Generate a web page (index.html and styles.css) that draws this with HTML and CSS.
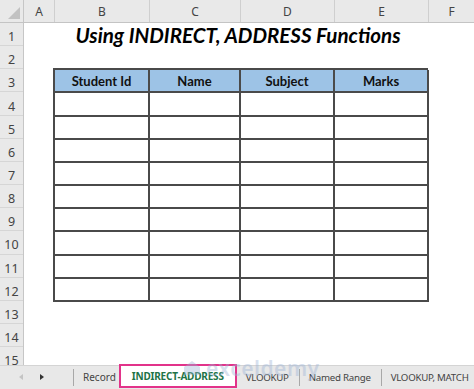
FILE: index.html
```html
<!DOCTYPE html>
<html>
<head>
<meta charset="utf-8">
<link rel="stylesheet" href="styles.css">
</head>
<body>
<div class="app">
  <div class="colheads">
    <div class="corner"><span class="tri"></span></div>
    <div class="ch">A</div>
    <div class="ch">B</div>
    <div class="ch">C</div>
    <div class="ch">D</div>
    <div class="ch">E</div>
    <div class="ch last">F</div>
  </div>
  <div class="body">
    <div class="rownums">
      <div class="rn">1</div><div class="rn">2</div><div class="rn">3</div><div class="rn">4</div><div class="rn">5</div>
      <div class="rn">6</div><div class="rn">7</div><div class="rn">8</div><div class="rn">9</div><div class="rn">10</div>
      <div class="rn">11</div><div class="rn">12</div><div class="rn">13</div><div class="rn">14</div><div class="rn">15</div>
    </div>
    <div class="sheet">
      <div class="title">Using INDIRECT, ADDRESS Functions</div>
      <div class="tbl">
        <div class="th">Student Id</div><div class="th">Name</div><div class="th">Subject</div><div class="th">Marks</div>
        <div class="td"></div><div class="td"></div><div class="td"></div><div class="td"></div>
        <div class="td"></div><div class="td"></div><div class="td"></div><div class="td"></div>
        <div class="td"></div><div class="td"></div><div class="td"></div><div class="td"></div>
        <div class="td"></div><div class="td"></div><div class="td"></div><div class="td"></div>
        <div class="td"></div><div class="td"></div><div class="td"></div><div class="td"></div>
        <div class="td"></div><div class="td"></div><div class="td"></div><div class="td"></div>
        <div class="td"></div><div class="td"></div><div class="td"></div><div class="td"></div>
        <div class="td"></div><div class="td"></div><div class="td"></div><div class="td"></div>
        <div class="td"></div><div class="td"></div><div class="td"></div><div class="td"></div>
      </div>
    </div>
  </div>
  <div class="tabbar">
    <div class="nav">
      <span class="arrow left"></span>
      <span class="arrow right"></span>
    </div>
    <span class="sep"></span>
    <div class="tab first">Record</div>
    <div class="tab active">INDIRECT-ADDRESS</div>
    <div class="tab">VLOOKUP</div>
    <span class="sep"></span>
    <div class="tab">Named Range</div>
    <span class="sep"></span>
    <div class="tab">VLOOKUP, MATCH</div>
  </div>
  <div class="watermark">
    <svg class="wm-icon" width="18" height="16" viewBox="0 0 18 16"><path d="M9 1 L17 7 L17 15 L1 15 L1 7 Z" fill="#9db3d6"/></svg>
    <span class="wm-text">exceldemy</span>
  </div>
</div>
</body>
</html>
```
FILE: styles.css
```css
* { box-sizing: border-box; }
html, body { margin: 0; padding: 0; background: #fff; }
.app {
  position: relative;
  width: 474px;
  height: 389px;
  overflow: hidden;
  display: flex;
  flex-direction: column;
  font-family: "Noto Sans", "Open Sans", sans-serif;
}
.colheads {
  display: grid;
  grid-template-columns: 24px 31px 95px 91px 94px 94px 1fr;
  height: 23px;
  background: #e9e9e9;
  border-bottom: 1px solid #c4c4c4;
  flex: none;
}
.corner {
  position: relative;
  border-right: 1px solid #c6c6c6;
}
.tri {
  position: absolute;
  right: 3px;
  bottom: 3px;
  width: 0;
  height: 0;
  border-left: 12px solid transparent;
  border-bottom: 12px solid #c2c2c2;
}
.ch {
  border-right: 1px solid #cfcfcf;
  display: flex;
  align-items: center;
  justify-content: center;
  font-size: 12px;
  color: #444;
}
.ch.last { border-right: none; }
.body {
  display: flex;
  height: 342px;
  overflow: hidden;
  flex: none;
}
.rownums {
  width: 24px;
  flex: none;
  background: #e9e9e9;
  border-right: 1px solid #c6c6c6;
  display: flex;
  flex-direction: column;
}
.rn {
  height: 23.17px;
  flex: none;
  border-bottom: 1px solid #d6d6d6;
  display: flex;
  align-items: center;
  justify-content: center;
  font-size: 12.5px;
  color: #444;
  padding-top: 5px;
}
.sheet {
  flex: 1;
  display: grid;
  grid-template-columns: 30px 95px 91px 94px 94px 1fr;
  grid-template-rows: repeat(15, 23.17px);
}
.title {
  grid-column: 2 / 6;
  grid-row: 1;
  display: flex;
  align-items: center;
  justify-content: center;
  font-family: "Lato", sans-serif;
  font-weight: 700;
  font-style: italic;
  font-size: 20.6px;
  color: #000;
  padding-top: 1px;
  margin-left: -6px;
}
.tbl {
  grid-column: 2 / 6;
  grid-row: 3 / 13;
  display: grid;
  grid-template-columns: 95px 91px 94px 94px;
  grid-template-rows: repeat(10, 1fr);
  border-left: 2px solid #4a4a4a;
  border-top: 2px solid #4a4a4a;
  margin-left: -1px;
  margin-top: -1px;
  margin-bottom: -1px;
}
.th, .td {
  border-right: 2px solid #4a4a4a;
  border-bottom: 2px solid #4a4a4a;
}
.th {
  background: #9dc3e6;
  display: flex;
  align-items: center;
  justify-content: center;
  font-family: "Lato", sans-serif;
  font-weight: 700;
  font-size: 13px;
  color: #111;
}
.tabbar {
  flex: 1;
  display: flex;
  align-items: center;
  background: #e8e8e8;
  border-top: 1px solid #d4d4d4;
  font-size: 9.7px;
  letter-spacing: -0.25px;
  color: #444;
  padding-bottom: 3px;
}
.nav {
  width: 73px;
  flex: none;
  display: flex;
  align-items: center;
  padding-left: 19px;
  gap: 17px;
}
.arrow {
  width: 0;
  height: 0;
  border-top: 3px solid transparent;
  border-bottom: 3px solid transparent;
}
.arrow.left { border-right: 4px solid #c4c4c4; }
.arrow.right { border-left: 4px solid #333; }
.sep {
  width: 1px;
  height: 17px;
  background: #a8a8a8;
  flex: none;
}
.tab {
  padding: 0 10px 0 9px;
  white-space: nowrap;
  flex: none;
}
.tab.first { padding: 0 3px 0 9px; letter-spacing: 0; font-size: 10px; }
.tab.active {
  background: #fff;
  color: #217346;
  font-weight: 700;
  font-size: 10px;
  border: 2px solid #e2338a;
  height: 24px;
  display: flex;
  align-items: center;
  margin-top: -2px;
  padding: 0 11px;
  letter-spacing: -0.2px;
}
.watermark {
  position: absolute;
  left: 183px;
  top: 354px;
  display: flex;
  align-items: center;
  gap: 5px;
  opacity: 0.4;
  pointer-events: none;
}
.wm-text {
  font-family: "Noto Sans", sans-serif;
  font-size: 21px;
  font-weight: 600;
  color: #9db3d6;
  letter-spacing: 0.5px;
}
```
